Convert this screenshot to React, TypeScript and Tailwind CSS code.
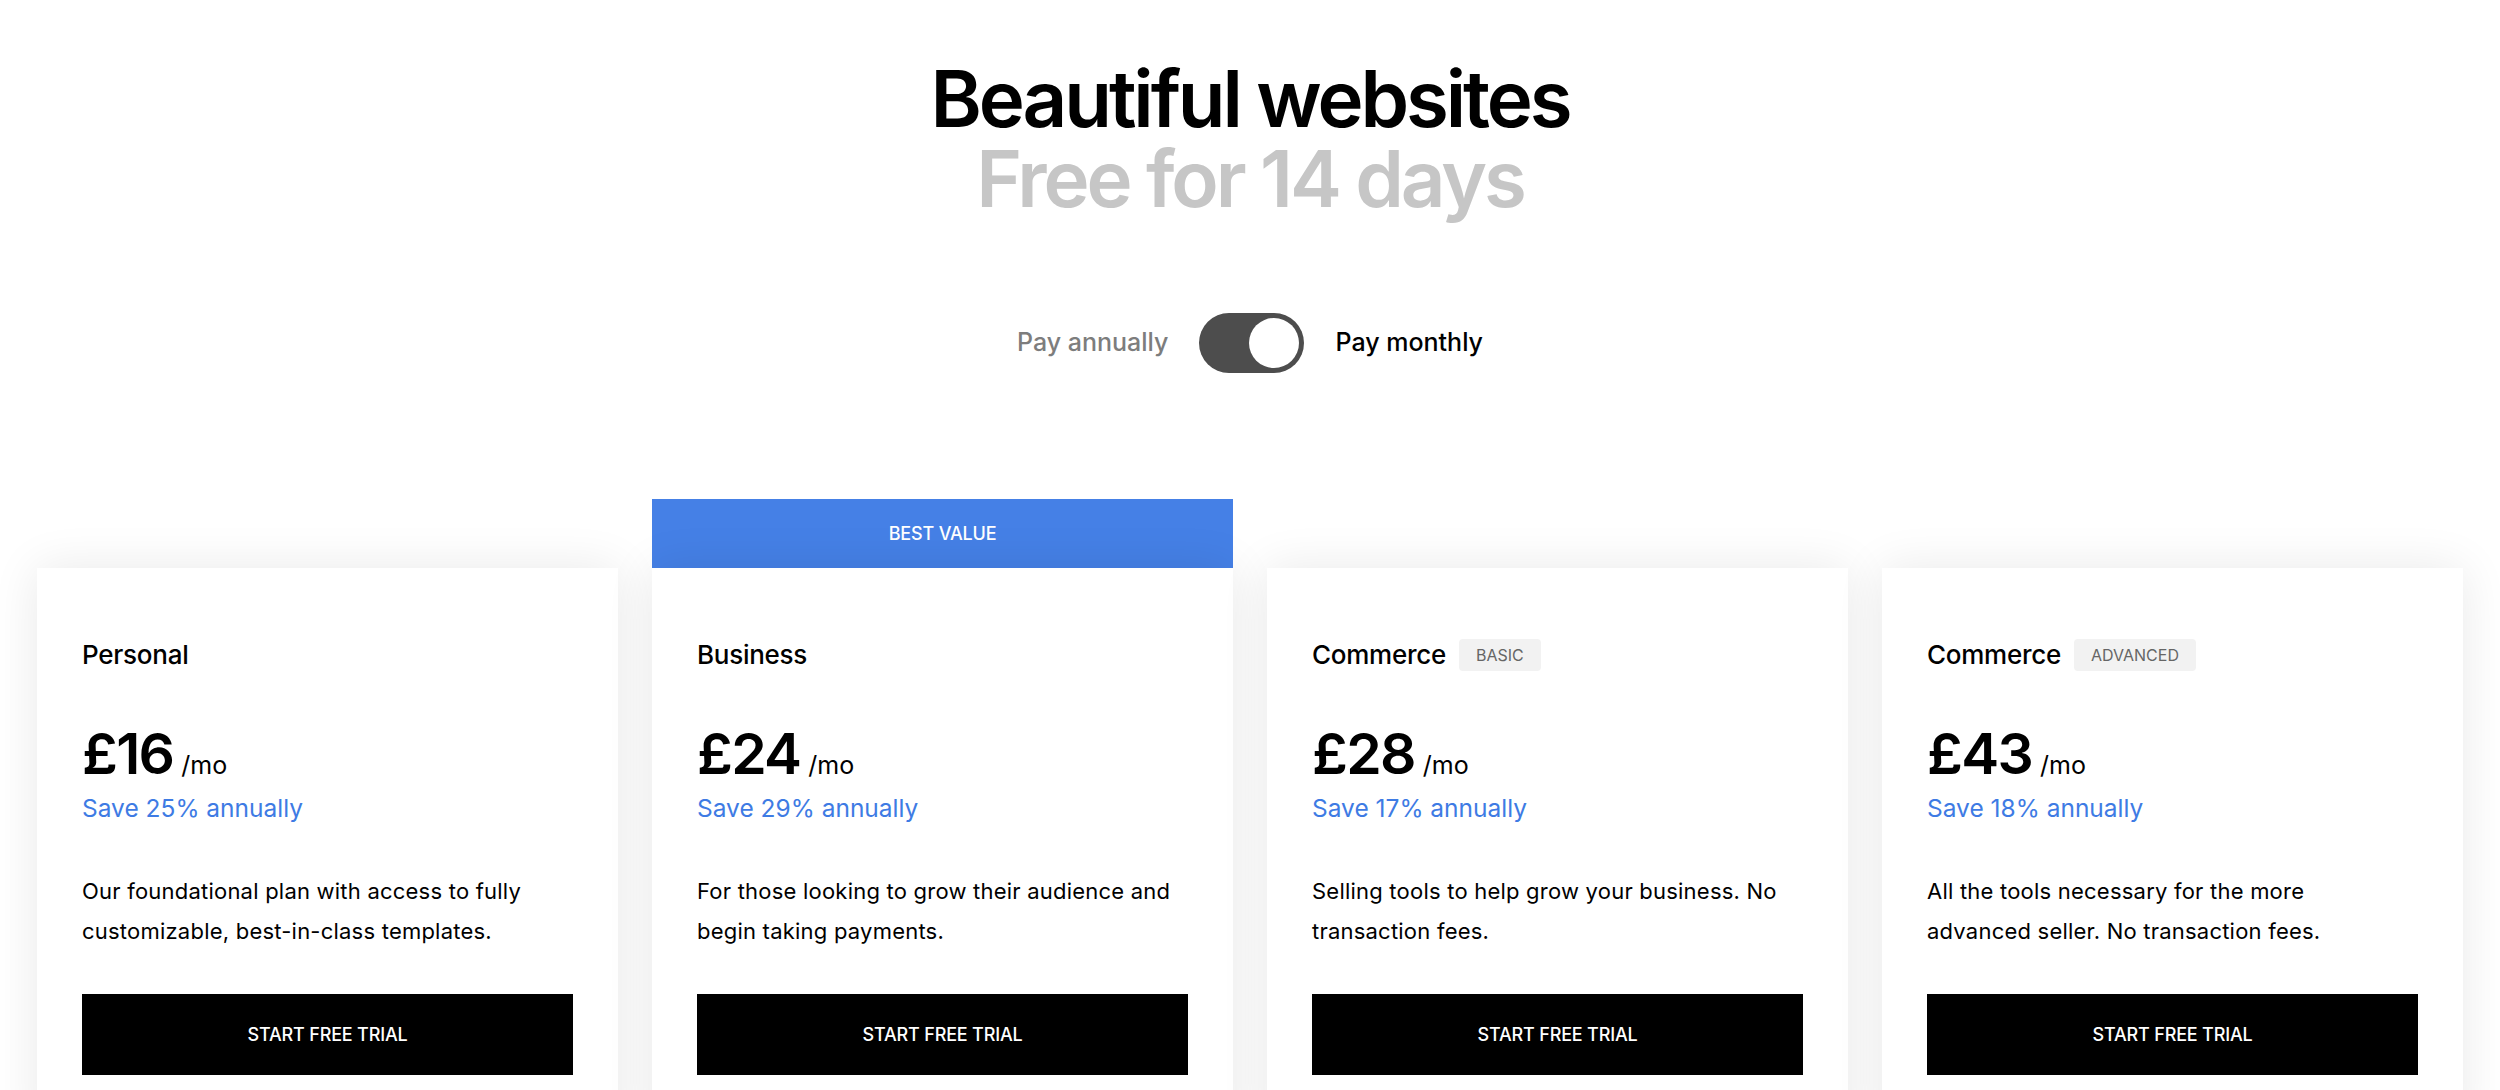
import React, { useState } from 'react';

type Plan = {
  name: string;
  tag?: string;
  price: string;
  save: string;
  lines: string[];
  featured?: boolean;
};

const plans: Plan[] = [
  {
    name: 'Personal',
    price: '£16',
    save: 'Save 25% annually',
    lines: ['Our foundational plan with access to fully', 'customizable, best-in-class templates.'],
  },
  {
    name: 'Business',
    price: '£24',
    save: 'Save 29% annually',
    lines: ['For those looking to grow their audience and', 'begin taking payments.'],
    featured: true,
  },
  {
    name: 'Commerce',
    tag: 'Basic',
    price: '£28',
    save: 'Save 17% annually',
    lines: ['Selling tools to help grow your business. No', 'transaction fees.'],
  },
  {
    name: 'Commerce',
    tag: 'Advanced',
    price: '£43',
    save: 'Save 18% annually',
    lines: ['All the tools necessary for the more', 'advanced seller. No transaction fees.'],
  },
];

const PlanCard: React.FC<{ plan: Plan }> = ({ plan }) => {
  return (
    <div className="flex flex-col">
      <div className="h-[69px]">
        {plan.featured && (
          <div className="h-full bg-[#4580e6] flex items-center justify-center text-white text-[18px] font-medium tracking-[-0.01em]">
            BEST VALUE
          </div>
        )}
      </div>
      <div className="bg-white shadow-[0_0_45px_rgba(0,0,0,0.09)] px-[45px] pt-[72px] pb-[60px]">
        <div className="flex items-center gap-[13px] h-[30px]">
          <h3 className="text-[26px] leading-[30px] font-medium text-black tracking-[-0.01em]">{plan.name}</h3>
          {plan.tag && (
            <span className="bg-[#f2f2f2] text-[#666] text-[16px] uppercase rounded-[4px] h-[32px] px-[17px] flex items-center">
              {plan.tag}
            </span>
          )}
        </div>
        <div className="mt-[55px] flex items-baseline h-[57px]">
          <span className="text-[57px] leading-[57px] font-semibold text-black tracking-[-0.03em]">{plan.price}</span>
          <span className="ml-[8px] text-[25px] text-black">/mo</span>
        </div>
        <p className="mt-[9px] text-[24.5px] leading-[34px] text-[#3e7be4]">{plan.save}</p>
        <p className="mt-[46px] text-[22px] leading-[40px] tracking-[0.01em] text-black h-[80px] whitespace-nowrap">
          {plan.lines[0]}
          <br />
          {plan.lines[1]}
        </p>
        <button className="mt-[43px] w-full h-[81px] bg-black text-white text-[18px] font-medium tracking-[-0.01em]">
          START FREE TRIAL
        </button>
      </div>
    </div>
  );
};

export default function App() {
  const [monthly, setMonthly] = useState(true);

  return (
    <div className="min-h-screen bg-white" style={{ fontFamily: 'Inter, "Liberation Sans", sans-serif' }}>
      <div className="pt-[59px] flex flex-col items-center">
        <h1 className="text-[78px] leading-[80px] font-semibold tracking-[-0.04em] text-black text-center">
          Beautiful websites
          <br />
          <span className="text-[#c6c6c6]">Free for 14 days</span>
        </h1>

        <div className="mt-[94px] flex items-center gap-[31px]">
          <span className={`text-[25px] font-medium ${monthly ? 'text-[#7d7d7d]' : 'text-black'}`}>Pay annually</span>
          <button
            onClick={() => setMonthly(!monthly)}
            className={`w-[105px] h-[60px] rounded-full bg-[#4d4d4d] p-[5px] flex items-center ${monthly ? 'justify-end' : 'justify-start'}`}
          >
            <span className="w-[50px] h-[50px] rounded-full bg-white block" />
          </button>
          <span className={`text-[25px] font-medium ${monthly ? 'text-black' : 'text-[#7d7d7d]'}`}>Pay monthly</span>
        </div>
      </div>

      <div className="mt-[126px] grid grid-cols-4 gap-[34px] px-[37px]">
        {plans.map((p, i) => (
          <PlanCard key={i} plan={p} />
        ))}
      </div>
    </div>
  );
}
